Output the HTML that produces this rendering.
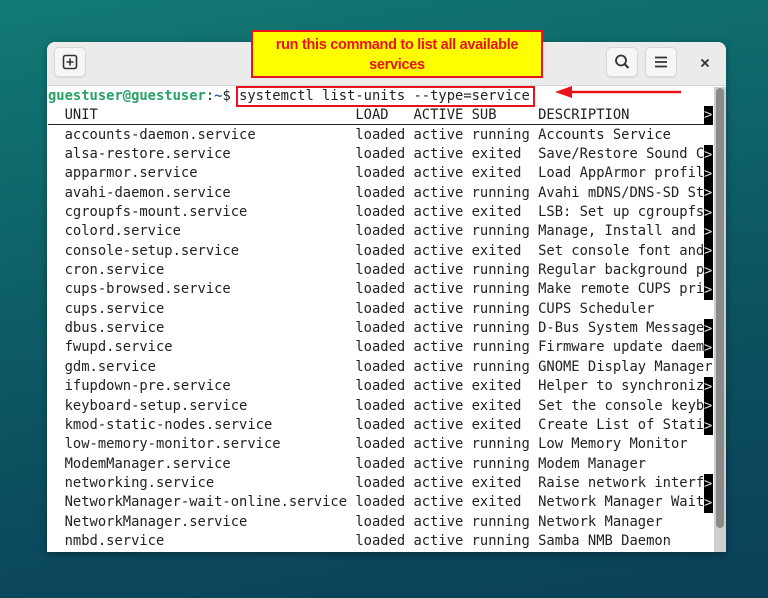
<!DOCTYPE html>
<html><head><meta charset="utf-8"><style>
*{margin:0;padding:0;box-sizing:border-box}
html,body{width:768px;height:598px;overflow:hidden}
body{position:relative;background:linear-gradient(170deg,#127a74 0%,#0d5f66 40%,#0b4a5e 75%,#0a4058 100%)}
.win{position:absolute;left:47px;top:42px;width:679px;height:510px;background:#fff;border-radius:8px 8px 0 0;overflow:hidden;box-shadow:0 2px 8px rgba(0,0,0,.35)}
.hdr{position:absolute;left:0;top:0;width:679px;height:44px;background:#ebebeb;border-bottom:1px solid #d6d6d6}
.btn{position:absolute;top:5px;width:32px;height:30px;background:#f6f6f6;border:1px solid #d8d8d8;border-radius:5px;box-shadow:0 1px 1px rgba(0,0,0,.08)}
.term{position:absolute;left:1px;top:45px;width:666px;font-family:"DejaVu Sans Mono","Liberation Mono",monospace;font-size:13.8px;line-height:19.35px;color:#222;white-space:pre}
.g{color:#26a269;font-weight:bold}
.b{color:#3465a4;font-weight:bold}
.blk{position:absolute;left:657px;width:9px;background:#000}
.gt{position:absolute;left:657px;width:9px;color:#ddd;font-family:"DejaVu Sans Mono",monospace;font-size:13.8px;line-height:19.35px}
.sb{position:absolute;left:667px;top:45px;width:12px;height:465px;background:#cfcfcf}
.th{position:absolute;left:669px;top:46px;width:8px;height:440px;background:#8a8a8a;border-radius:4px}
</style></head><body>
<div class="win">
 <div class="hdr">
  <div class="btn" style="left:7px"><svg width="30" height="28" viewBox="0 0 30 28"><rect x="8.5" y="7.5" width="13" height="13" rx="2" fill="none" stroke="#333" stroke-width="1.6"/><path d="M15 10.5v7M11.5 14h7" stroke="#333" stroke-width="1.6"/></svg></div>
  <div class="btn" style="left:559px"><svg width="30" height="28" viewBox="0 0 30 28"><circle cx="14" cy="12.5" r="5" fill="none" stroke="#333" stroke-width="1.8"/><path d="M17.5 16l4 4" stroke="#333" stroke-width="2"/></svg></div>
  <div class="btn" style="left:598px"><svg width="30" height="28" viewBox="0 0 30 28"><path d="M9 9.5h12M9 14h12M9 18.5h12" stroke="#333" stroke-width="1.7"/></svg></div>
  <svg style="position:absolute;left:652px;top:15px" width="12" height="12" viewBox="0 0 12 12"><path d="M2.5 2.5l7 7M9.5 2.5l-7 7" stroke="#333" stroke-width="1.8"/></svg>
 </div>
 <div class="blk" style="top:64px;height:19px"></div>
 <div class="blk" style="top:103px;height:155px"></div>
 <div class="blk" style="top:277px;height:39px"></div>
 <div class="blk" style="top:335px;height:58px"></div>
 <div class="blk" style="top:432px;height:39px"></div>
 <div class="term"><span class="g">guestuser@guestuser</span>:<span class="b">~</span>$ systemctl list-units --type=service
<span style="display:inline-block;border-bottom:1.5px solid #222;width:656px;line-height:18px">  UNIT                               LOAD   ACTIVE SUB     DESCRIPTION</span>
  accounts-daemon.service            loaded active running Accounts Service
  alsa-restore.service               loaded active exited  Save/Restore Sound C
  apparmor.service                   loaded active exited  Load AppArmor profil
  avahi-daemon.service               loaded active running Avahi mDNS/DNS-SD St
  cgroupfs-mount.service             loaded active exited  LSB: Set up cgroupfs
  colord.service                     loaded active running Manage, Install and 
  console-setup.service              loaded active exited  Set console font and
  cron.service                       loaded active running Regular background p
  cups-browsed.service               loaded active running Make remote CUPS pri
  cups.service                       loaded active running CUPS Scheduler
  dbus.service                       loaded active running D-Bus System Message
  fwupd.service                      loaded active running Firmware update daem
  gdm.service                        loaded active running GNOME Display Manager
  ifupdown-pre.service               loaded active exited  Helper to synchroniz
  keyboard-setup.service             loaded active exited  Set the console keyb
  kmod-static-nodes.service          loaded active exited  Create List of Stati
  low-memory-monitor.service         loaded active running Low Memory Monitor
  ModemManager.service               loaded active running Modem Manager
  networking.service                 loaded active exited  Raise network interf
  NetworkManager-wait-online.service loaded active exited  Network Manager Wait
  NetworkManager.service             loaded active running Network Manager
  nmbd.service                       loaded active running Samba NMB Daemon</div>
 <div class="gt" style="top:64px">&gt;</div>
 <div class="gt" style="top:103.7px">&gt;<br>&gt;<br>&gt;<br>&gt;<br>&gt;<br>&gt;<br>&gt;<br>&gt;</div>
 <div class="gt" style="top:277.8px">&gt;<br>&gt;</div>
 <div class="gt" style="top:336px">&gt;<br>&gt;<br>&gt;</div>
 <div class="gt" style="top:432.7px">&gt;<br>&gt;</div>
 <div class="sb"></div><div class="th"></div>
</div>
<div style="position:absolute;left:236px;top:86px;width:299px;height:21px;border:2px solid #e8131b"></div>
<svg style="position:absolute;left:550px;top:84px" width="140" height="18"><path d="M18 8h113" stroke="#e8131b" stroke-width="2.5"/><path d="M5 8l17-6v12z" fill="#e8131b"/></svg>
<div style="position:absolute;left:251px;top:30px;width:292px;height:48px;background:#ffff00;border:2px solid #e8131b;color:#e8131b;font-family:'Liberation Sans',sans-serif;font-weight:bold;font-size:14.5px;line-height:20px;text-align:center;padding-top:3px;letter-spacing:-0.3px">run this command to list all available<br>services</div>
</body></html>
